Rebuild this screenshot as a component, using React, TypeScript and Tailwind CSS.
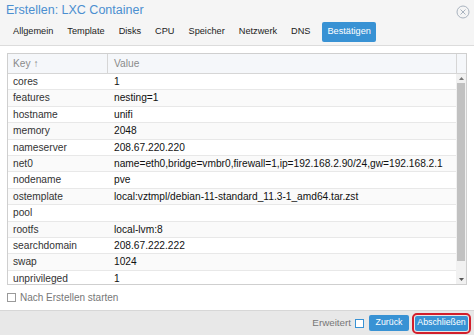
const rows: [string, string][] = [
  ["cores", "1"],
  ["features", "nesting=1"],
  ["hostname", "unifi"],
  ["memory", "2048"],
  ["nameserver", "208.67.220.220"],
  ["net0", "name=eth0,bridge=vmbr0,firewall=1,ip=192.168.2.90/24,gw=192.168.2.1"],
  ["nodename", "pve"],
  ["ostemplate", "local:vztmpl/debian-11-standard_11.3-1_amd64.tar.zst"],
  ["pool", ""],
  ["rootfs", "local-lvm:8"],
  ["searchdomain", "208.67.222.222"],
  ["swap", "1024"],
  ["unprivileged", "1"],
];

const tabs = ["Allgemein", "Template", "Disks", "CPU", "Speicher", "Netzwerk", "DNS"];

const App = () => {
  return (
    <div
      className="w-[474px] h-[335px] bg-white flex flex-col overflow-hidden text-[#333]"
      style={{ fontFamily: '"Liberation Sans", Arial, sans-serif' }}
    >
      {/* header */}
      <div className="bg-[#f5f5f5] h-[46px] flex flex-col border-b border-[#dcdcdc]">
        <div className="h-[21px] flex items-center justify-between pl-[6px] pr-[4px]">
          <span className="text-[12.5px] text-[#4b8fd0]">Erstellen: LXC Container</span>
          <svg width="14" height="14" viewBox="0 0 14 14" className="mt-[3px]">
            <circle cx="7" cy="7" r="6" fill="none" stroke="#a9b3bf" strokeWidth="1" />
            <path d="M4.5 4.5 L9.5 9.5 M9.5 4.5 L4.5 9.5" stroke="#a9b3bf" strokeWidth="1" />
          </svg>
        </div>
        <div className="flex items-center h-[22px] pl-[6px] text-[9.2px]">
          {tabs.map((t) => (
            <span key={t} className="px-[7px] py-[2px] text-[#222]">
              {t}
            </span>
          ))}
          <span className="ml-[5px] px-[5px] py-[3px] bg-[#3892d4] text-white rounded-[2px]">
            Bestätigen
          </span>
        </div>
      </div>

      {/* grid */}
      <div className="flex-1 px-[7px] pt-[7px]">
        <div className="border border-[#cfcfcf] h-[232px] flex flex-col text-[10.2px]">
          <div className="flex h-[20px] bg-[#f5f7fa] border-b border-[#d6d6d6] text-[#8a8a8a]">
            <div className="w-[100px] border-r border-[#d6d6d6] flex items-center pl-[5px]">Key ↑</div>
            <div className="flex-1 flex items-center pl-[6px]">Value</div>
            <div className="w-[10px] border-l border-[#d6d6d6]" />
          </div>
          <div className="flex flex-1 overflow-hidden">
            <div className="flex-1 overflow-hidden">
              {rows.map(([k, v], i) => (
                <div
                  key={k}
                  className={`flex h-[16.4px] items-center border-b border-[#e8e8e8] ${
                    i % 2 === 1 ? "bg-[#fafafa]" : "bg-white"
                  }`}
                >
                  <div className="w-[100px] pl-[5px] text-[#333] shrink-0">{k}</div>
                  <div className="flex-1 pl-[6px] text-[#111] whitespace-nowrap overflow-hidden">{v}</div>
                </div>
              ))}
            </div>
            <div className="w-[10px] bg-[#f1f1f1] flex flex-col items-center">
              <div className="h-[9px] flex items-center justify-center">
                <svg width="5" height="3" viewBox="0 0 5 3">
                  <path d="M0 3 L2.5 0 L5 3 Z" fill="#777" />
                </svg>
              </div>
              <div className="w-[8px] h-[178px] bg-[#c1c1c1]" />
              <div className="flex-1" />
              <div className="h-[9px] flex items-center justify-center">
                <svg width="5" height="3" viewBox="0 0 5 3">
                  <path d="M0 0 L5 0 L2.5 3 Z" fill="#555" />
                </svg>
              </div>
            </div>
          </div>
        </div>
        <div className="flex items-center gap-[4px] mt-[5px] text-[10px] text-[#777]">
          <span className="w-[9px] h-[9px] border border-[#9a9a9a] bg-white" />
          Nach Erstellen starten
        </div>
      </div>

      {/* footer */}
      <div className="h-[25px] bg-[#e8e8e8] border-t border-[#d7d7d7] flex items-center justify-end pr-[3px] text-[8.8px]">
        <span className="text-[#777] mr-[4px] text-[9.8px]">Erweitert</span>
        <span className="w-[9px] h-[9px] border border-[#3892d4] bg-white mr-[5px]" />
        <button className="h-[16px] w-[40px] bg-[#3892d4] text-white rounded-[2px] mr-[3px]">Zurück</button>
        <span className="rounded-[5px] border-2 border-[#d21e2b] p-[1px]">
          <button className="h-[15px] w-[53px] bg-[#3892d4] text-white rounded-[2px] flex items-center justify-center">
            Abschließen
          </button>
        </span>
      </div>
    </div>
  );
};

export default App;
